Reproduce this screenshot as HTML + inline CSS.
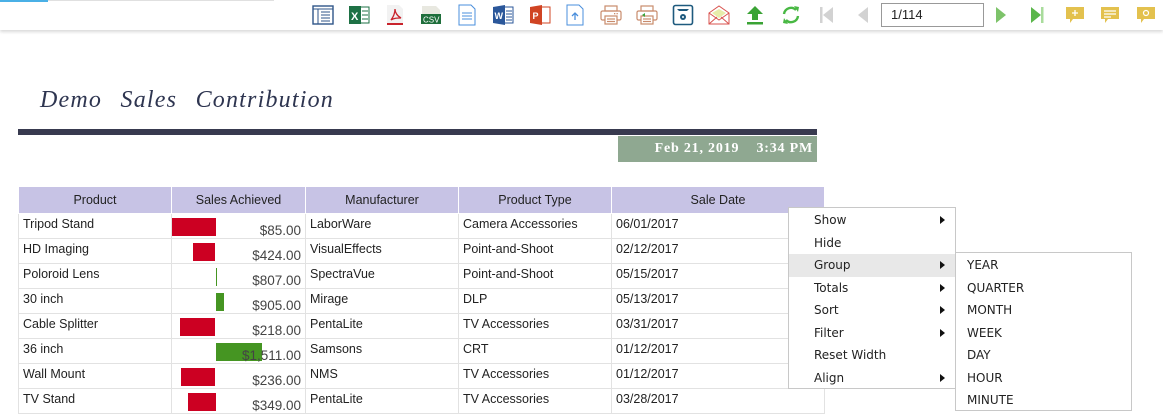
<!DOCTYPE html>
<html><head><meta charset="utf-8"><style>
*{margin:0;padding:0;box-sizing:border-box}
body{width:1163px;height:416px;overflow:hidden;background:#fff;position:relative;font-family:"Liberation Sans",sans-serif}
.abs{position:absolute}
.tb{position:absolute;left:0;top:0;width:1163px;height:30px;background:#fff;box-shadow:0 2px 3px rgba(0,0,0,.15)}
.ic{position:absolute;top:4px;width:22px;height:22px}
.title{left:40px;top:87px;font-family:"Liberation Serif",serif;font-style:italic;font-size:24px;color:#2e3550;word-spacing:2px;letter-spacing:1.2px;white-space:pre}
table{position:absolute;left:18px;top:186px;border-collapse:collapse;font-size:12.5px;color:#222}
td,th{border:1px solid #e2e2e2;height:25px;padding:0 4px;vertical-align:top;position:relative}
th{background:#c7c3e5;font-weight:normal;text-align:center;vertical-align:middle;height:27px;border-color:#fff}
td{padding-top:3px}
.amt{text-align:right;padding-top:9px;color:#444;font-size:13.5px}
.bar{position:absolute;top:4px;height:18px}
.r{background:#cc0022}.g{background:#459522}
.menu{position:absolute;background:#fff;border:1px solid #c8c8c8;font-family:"DejaVu Sans",sans-serif;font-size:12px;color:#222}
.mi{height:22.5px;line-height:22.5px;padding-left:25px;position:relative}
.mi.h{background:#e8e8e8}
.ar{position:absolute;right:10px;top:7px;width:0;height:0;border-left:5px solid #111;border-top:4.5px solid transparent;border-bottom:4.5px solid transparent}
.sm .mi{padding-left:11px}
</style></head><body>
<div class="tb">
<div class="abs" style="left:0;top:0;width:48px;height:2px;background:#4ab0e6"></div>
<div class="abs" style="left:48px;top:0;width:226px;height:1px;background:#e0e0e0"></div>
<svg class="ic" style="left:312px" viewBox="0 0 22 22"><rect x="1" y="2" width="20" height="18" fill="#fff" stroke="#2f5588" stroke-width="1.4"/><line x1="1" y1="5" x2="21" y2="5" stroke="#2f5588"/><line x1="6" y1="5" x2="6" y2="20" stroke="#2f5588"/><g stroke="#2f5588"><line x1="9" y1="8" x2="18" y2="8"/><line x1="9" y1="11" x2="18" y2="11"/><line x1="9" y1="14" x2="18" y2="14"/><line x1="9" y1="17" x2="18" y2="17"/></g></svg>
<svg class="ic" style="left:348px" viewBox="0 0 22 22"><rect x="9" y="3" width="12" height="16" fill="#fff" stroke="#1e7145"/><rect x="1" y="2" width="12" height="18" fill="#1e7145"/><text x="3" y="16" font-size="11" font-weight="bold" fill="#fff" font-family="Liberation Sans">X</text><g stroke="#1e7145"><line x1="14" y1="7" x2="20" y2="7"/><line x1="14" y1="11" x2="20" y2="11"/><line x1="14" y1="15" x2="20" y2="15"/></g></svg>
<svg class="ic" style="left:384px" viewBox="0 0 22 22"><path d="M3 1h12l4 4v15H3z" fill="#f2f2f2"/><rect x="3" y="19" width="16" height="2" fill="#c9232c"/><path d="M7 16c3-4 4-8 4-11 0 3 2 7 6 9-4 0-7 0-10 2z" fill="none" stroke="#c9232c" stroke-width="1.3"/></svg>
<svg class="ic" style="left:420px" viewBox="0 0 22 22"><path d="M2 2h14l4 4v4H2z" fill="#e8e8e0"/><rect x="1" y="10" width="20" height="10" fill="#1e6e3b"/><text x="3" y="18.5" font-size="8" fill="#fff" font-family="Liberation Sans">CSV</text></svg>
<svg class="ic" style="left:456px" viewBox="0 0 22 22"><path d="M3 1h12l4 4v16H3z" fill="#fff" stroke="#4a8fdc"/><g stroke="#4a8fdc"><line x1="6" y1="9" x2="16" y2="9"/><line x1="6" y1="12" x2="16" y2="12"/><line x1="6" y1="15" x2="16" y2="15"/></g></svg>
<svg class="ic" style="left:492px" viewBox="0 0 22 22"><rect x="9" y="3" width="12" height="16" fill="#fff" stroke="#2b579a"/><path d="M1 3l12-2v20L1 19z" fill="#2b579a"/><text x="2.5" y="15" font-size="9" font-weight="bold" fill="#fff" font-family="Liberation Sans">W</text><g stroke="#2b579a"><line x1="14" y1="7" x2="20" y2="7"/><line x1="14" y1="10" x2="20" y2="10"/><line x1="14" y1="13" x2="20" y2="13"/><line x1="14" y1="16" x2="20" y2="16"/></g></svg>
<svg class="ic" style="left:529px" viewBox="0 0 22 22"><rect x="9" y="3" width="12" height="16" fill="#fff" stroke="#d04423"/><path d="M1 3l12-2v20L1 19z" fill="#d04423"/><text x="3.5" y="15" font-size="9" font-weight="bold" fill="#fff" font-family="Liberation Sans">P</text></svg>
<svg class="ic" style="left:564px" viewBox="0 0 22 22"><path d="M3 1h12l4 4v16H3z" fill="#fff" stroke="#4a8fdc"/><path d="M11 16V9M8 12l3-3 3 3" fill="none" stroke="#4a8fdc" stroke-width="1.3"/></svg>
<svg class="ic" style="left:600px" viewBox="0 0 22 22"><g fill="none" stroke="#c98b6c" stroke-width="1.2"><rect x="5" y="2" width="12" height="5"/><rect x="1" y="7" width="20" height="9" rx="1.5"/><rect x="5" y="12" width="12" height="8" fill="#fff"/><line x1="7" y1="15" x2="15" y2="15"/><line x1="7" y1="17.5" x2="15" y2="17.5"/></g><g fill="#c98b6c"><rect x="14" y="9" width="1.3" height="1.3"/><rect x="16.5" y="9" width="1.3" height="1.3"/></g></svg>
<svg class="ic" style="left:636px" viewBox="0 0 22 22"><g fill="none" stroke="#c98b6c" stroke-width="1.2"><rect x="5" y="2" width="12" height="5"/><rect x="1" y="7" width="20" height="9" rx="1.5"/><rect x="5" y="12" width="12" height="8" fill="#fff"/><line x1="7" y1="15" x2="15" y2="15"/><line x1="7" y1="17.5" x2="15" y2="17.5"/></g><path d="M6 11l3-2v4z" fill="#3aa33a"/></svg>
<svg class="ic" style="left:672px" viewBox="0 0 22 22"><rect x="1.5" y="1.5" width="19" height="19" rx="2" fill="#fff" stroke="#1e5a7e" stroke-width="1.6"/><path d="M5 5h12l-2 2H7z" fill="#1e5a7e"/><circle cx="11" cy="13" r="3" fill="#1e5a7e"/><circle cx="11" cy="13" r="1" fill="#fff"/></svg>
<svg class="ic" style="left:708px" viewBox="0 0 22 22"><path d="M1 9l10-7 10 7v11H1z" fill="#fff" stroke="#d9534f"/><path d="M4 9l7 5 7-5-7-4z" fill="#e7ecaa"/><path d="M1 20l8-7M21 20l-8-7M1 9l10 7 10-7" fill="none" stroke="#d9534f"/></svg>
<svg class="ic" style="left:744px" viewBox="0 0 22 22"><path d="M11 2l8 8h-5v6H8v-6H3z" fill="#3aa335"/><rect x="3" y="18" width="16" height="2.5" fill="#3aa335"/></svg>
<svg class="ic" style="left:780px" viewBox="0 0 22 22"><g fill="none" stroke="#48b843" stroke-width="2.4"><path d="M4 10a7 7 0 0 1 12-4"/><path d="M18 12a7 7 0 0 1-12 4"/></g><path d="M14 2l5 1-1 5z" fill="#48b843"/><path d="M8 20l-5-1 1-5z" fill="#48b843"/></svg>
<svg class="ic" style="left:816px" viewBox="0 0 22 22"><rect x="4" y="3" width="2.5" height="16" fill="#d2d2d2"/><path d="M17 3v16l-10-8z" fill="#d2d2d2"/></svg>
<svg class="ic" style="left:852px" viewBox="0 0 22 22"><path d="M16 3v16l-10-8z" fill="#d2d2d2"/></svg>
<div class="abs" style="left:881px;top:3px;width:103px;height:24px;border:1px solid #999;font-size:13px;line-height:22px;padding-left:9px;color:#222">1/114</div>
<svg class="ic" style="left:990px" viewBox="0 0 22 22"><path d="M6 3v16l10-8z" fill="#7dc36a"/></svg>
<svg class="ic" style="left:1026px" viewBox="0 0 22 22"><path d="M5 3v16l10-8z" fill="#5ab64a"/><rect x="15" y="3" width="2.5" height="16" fill="#a9dc9c"/></svg>
<svg class="ic" style="left:1064px" viewBox="0 0 22 22"><path d="M2 3h18v12H9l-3 4v-4H2z" fill="#e3c14e"/><path d="M11 6v6M8 9h6" stroke="#fff" stroke-width="1.3"/></svg>
<svg class="ic" style="left:1099px" viewBox="0 0 22 22"><path d="M2 3h18v12H9l-3 4v-4H2z" fill="#e3c14e"/><path d="M5 7h12M5 10h12M5 13h7" stroke="#fff" stroke-width="1.2"/></svg>
<svg class="ic" style="left:1135px" viewBox="0 0 22 22"><path d="M2 3h18v12H9l-3 4v-4H2z" fill="#e3c14e"/><circle cx="11" cy="9" r="2.5" fill="none" stroke="#fff" stroke-width="1.2"/></svg>
</div>

<div class="abs title">Demo  Sales  Contribution</div>
<div class="abs" style="left:18px;top:129px;width:799px;height:6px;background:#383a4f"></div>
<div class="abs" style="left:618px;top:136px;width:199px;height:26px;background:#8fa891;color:#fff;font-weight:bold;font-size:14px;line-height:26px;text-align:right;padding-right:4px;font-family:'Liberation Serif',serif;letter-spacing:0.8px;white-space:pre">Feb 21, 2019    3:34 PM</div>

<table>
<tr><th style="width:153px">Product</th><th style="width:134px">Sales Achieved</th><th style="width:153px">Manufacturer</th><th style="width:153px">Product Type</th><th style="width:213px">Sale Date</th></tr>
<tr><td>Tripod Stand</td><td class="amt"><div class="bar r" style="left:0;width:44px"></div>$85.00</td><td>LaborWare</td><td>Camera Accessories</td><td>06/01/2017</td></tr>
<tr><td>HD Imaging</td><td class="amt"><div class="bar r" style="left:21px;width:22px"></div>$424.00</td><td>VisualEffects</td><td>Point-and-Shoot</td><td>02/12/2017</td></tr>
<tr><td>Poloroid Lens</td><td class="amt"><div class="bar g" style="left:44px;width:1px"></div>$807.00</td><td>SpectraVue</td><td>Point-and-Shoot</td><td>05/15/2017</td></tr>
<tr><td>30 inch</td><td class="amt"><div class="bar g" style="left:44px;width:8px"></div>$905.00</td><td>Mirage</td><td>DLP</td><td>05/13/2017</td></tr>
<tr><td>Cable Splitter</td><td class="amt"><div class="bar r" style="left:8px;width:35px"></div>$218.00</td><td>PentaLite</td><td>TV Accessories</td><td>03/31/2017</td></tr>
<tr><td>36 inch</td><td class="amt"><div class="bar g" style="left:44px;width:46px"></div><span style="position:relative">$1,511.00</span></td><td>Samsons</td><td>CRT</td><td>01/12/2017</td></tr>
<tr><td>Wall Mount</td><td class="amt"><div class="bar r" style="left:9px;width:34px"></div>$236.00</td><td>NMS</td><td>TV Accessories</td><td>01/12/2017</td></tr>
<tr><td>TV Stand</td><td class="amt"><div class="bar r" style="left:16px;width:28px"></div>$349.00</td><td>PentaLite</td><td>TV Accessories</td><td>03/28/2017</td></tr>
</table>

<div class="menu" style="left:788px;top:207px;width:168px;height:182px;padding-top:1px">
<div class="mi">Show<span class="ar"></span></div>
<div class="mi">Hide</div>
<div class="mi h">Group<span class="ar"></span></div>
<div class="mi">Totals<span class="ar"></span></div>
<div class="mi">Sort<span class="ar"></span></div>
<div class="mi">Filter<span class="ar"></span></div>
<div class="mi">Reset Width</div>
<div class="mi">Align<span class="ar"></span></div>
</div>
<div class="menu sm" style="left:955px;top:252px;width:177px;height:159px;padding-top:1px">
<div class="mi">YEAR</div>
<div class="mi">QUARTER</div>
<div class="mi">MONTH</div>
<div class="mi">WEEK</div>
<div class="mi">DAY</div>
<div class="mi">HOUR</div>
<div class="mi">MINUTE</div>
</div>
</body></html>
